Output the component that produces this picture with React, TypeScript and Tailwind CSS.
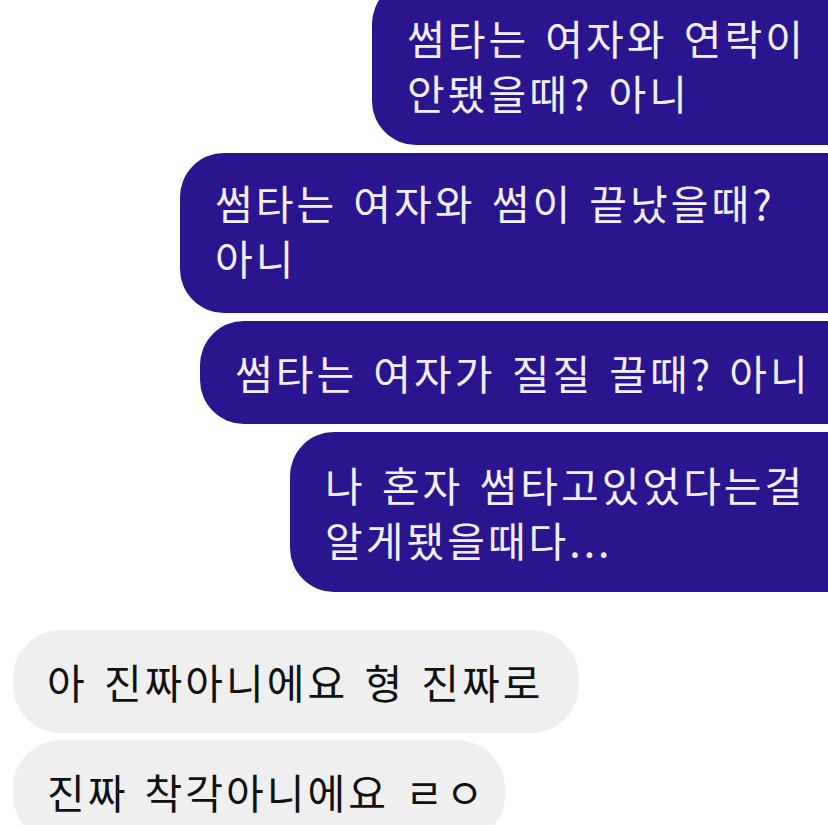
import React from 'react';

const sent: { lines: string[]; w: string; pad: string }[] = [
  { lines: ['썸타는 여자와 연락이', '안됐을때? 아니'], w: 'w-[496px]', pad: 'pt-[30px] pb-[25px]' },
  { lines: ['썸타는 여자와 썸이 끝났을때?', '아니'], w: 'w-[688px]', pad: 'pt-[22px] pb-[28px]' },
  { lines: ['썸타는 여자가 질질 끌때? 아니'], w: 'w-[668px]', pad: 'pt-[24px] pb-[24px]' },
  { lines: ['나 혼자 썸타고있었다는걸', '알게됐을때다...'], w: 'w-[578px]', pad: 'pt-[25px] pb-[25px]' },
];

const received: { text: string; w: string }[] = [
  { text: '아 진짜아니에요 형 진짜로', w: 'w-[566px]' },
  { text: '진짜 착각아니에요 ㄹㅇ', w: 'w-[492px]' },
];

export default function App() {
  return (
    <div className="w-[828px] h-[825px] overflow-hidden bg-white font-['Noto_Sans_CJK_KR','Noto_Sans',sans-serif] text-[41px] leading-[55px] tracking-[3px] [word-spacing:4px]">
      {/* outgoing messages, cut off on the right */}
      <div className="flex flex-col items-end gap-[8px] -mt-[20px] -mr-[40px]">
        {sent.map((m, i) => (
          <div key={i} className={`${m.w} ${m.pad} bg-[#2a158f] text-[#f3eefe] rounded-l-[44px] pl-[35px] whitespace-nowrap`}>
            {m.lines.map((l, j) => (
              <div key={j}>{l}</div>
            ))}
          </div>
        ))}
      </div>

      {/* incoming messages */}
      <div className="flex flex-col items-start gap-[7px] mt-[38px] ml-[13px]">
        {received.map((m, i) => (
          <div key={i} className={`${m.w} bg-[#efefef] text-[#111111] rounded-[48px] pl-[34px] py-[24px] whitespace-nowrap`}>
            {m.text}
          </div>
        ))}
      </div>
    </div>
  );
}
